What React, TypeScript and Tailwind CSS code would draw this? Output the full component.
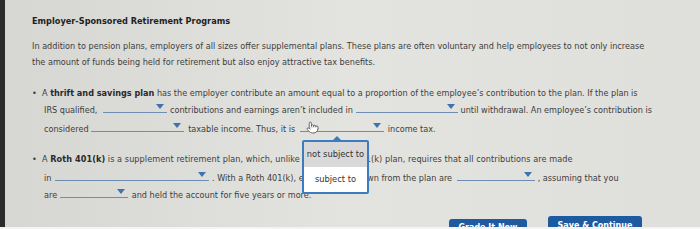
import React from 'react'
import { Pointer } from 'lucide-react'

function Drop({ w, className = '' }: { w: number; className?: string }) {
  return (
    <span
      className={'relative inline-block align-baseline border-b border-[#6d8db3] h-[12px] ' + className}
      style={{ width: w }}
    >
      <span className="absolute right-[3px] top-[3px] w-0 h-0 border-l-[4px] border-r-[4px] border-t-[5px] border-l-transparent border-r-transparent border-t-[#3f73ad]" />
    </span>
  )
}

export default function App() {
  return (
    <div
      className="relative w-[700px] h-[229px] overflow-hidden flex bg-linear-to-r from-[#d6d6d2] via-[#e3e3df] to-[#dfdfdb] text-[#3d3d3d]"
      style={{ fontFamily: '"DejaVu Sans", Verdana, sans-serif' }}
    >
      <div className="w-[5px] shrink-0 bg-[#2b2b2b]" />
      <div className="flex-1 flex flex-col pl-[27px] text-[8.15px] leading-[16px] whitespace-nowrap">
        <div className="mt-[13px] h-[16px] font-bold text-[8.2px] text-[#1f1f1f]">
          Employer-Sponsored Retirement Programs
        </div>

        <div className="mt-[9px] h-[16px]">
          In addition to pension plans, employers of all sizes offer supplemental plans. These plans are often voluntary and help employees to not only increase
        </div>
        <div className="h-[16px]">
          the amount of funds being held for retirement but also enjoy attractive tax benefits.
        </div>

        <div className="mt-[15px] h-[16px] flex">
          <span className="w-[10px]">•</span>
          <span>
            A <b className="text-[#2a2a2a]">thrift and savings plan</b> has the employer contribute an amount equal to a proportion of the employee’s contribution to the plan. If the plan is
          </span>
        </div>
        <div className="h-[16px] pl-[12px]">
          IRS qualified, <Drop w={64} className="ml-[3px] mr-[3px]" />contributions and earnings aren’t included in <Drop w={102} className="ml-[1px] mr-[2px]" />until withdrawal. An employee’s contribution is
        </div>
        <div className="mt-[3px] h-[16px] pl-[12px]">
          considered <Drop w={93} className="mr-[4px]" />taxable income. Thus, it is <Drop w={84} className="ml-[2px] mr-[4px]" />income tax.
        </div>

        <div className="mt-[15px] h-[16px] flex tracking-[0.07px]">
          <span className="w-[10px]">•</span>
          <span>
            A <b className="text-[#2a2a2a]">Roth 401(k)</b> is a supplement retirement plan, which, unlike a traditional 401(k) plan, requires that all contributions are made
          </span>
        </div>
        <div className="mt-[2px] h-[16px] pl-[12px]">
          in <Drop w={154} className="ml-[1px] mr-[3px]" />. With a Roth 401(k), earnings withdrawn from the plan are <Drop w={78} className="ml-[2px] mr-[3px]" />, assuming that you
        </div>
        <div className="mt-[1px] h-[16px] pl-[12px]">
          are <Drop w={68} className="mr-[4px]" />and held the account for five years or more.
        </div>

        <div className="mt-[14px] flex items-start">
          <div className="ml-[417px] mt-[3px] w-[78px] h-[12px] rounded-t-[3px] bg-[#1f5b9e] text-white font-bold text-[8px] leading-[18px] text-center">
            Grade It Now
          </div>
          <div className="ml-[21px] w-[94px] h-[14px] rounded-t-[3px] bg-[#1d5a9f] text-white font-bold text-[8px] leading-[20px] text-center">
            Save &amp; Continue
          </div>
        </div>
      </div>
      <div className="absolute left-0 bottom-0 w-full h-[2px] bg-[#f4f4f2]" />

      <Pointer className="absolute left-[306px] top-[121px] w-[13px] h-[13px] text-[#555] fill-white" strokeWidth={1.6} />

      <div className="absolute left-[302px] top-[140px] w-[67px] border-2 border-[#3b7cc0] bg-white rounded-[2px] text-[8.3px] text-[#333] text-center leading-[24px]">
        <div className="absolute left-[28px] -top-[6px] w-0 h-0 border-l-[5px] border-r-[5px] border-b-[5px] border-l-transparent border-r-transparent border-b-[#3b7cc0]" />
        <div className="bg-[#d9d9d9] h-[25px]">not subject to</div>
        <div className="h-[25px]">subject to</div>
      </div>
    </div>
  )
}
